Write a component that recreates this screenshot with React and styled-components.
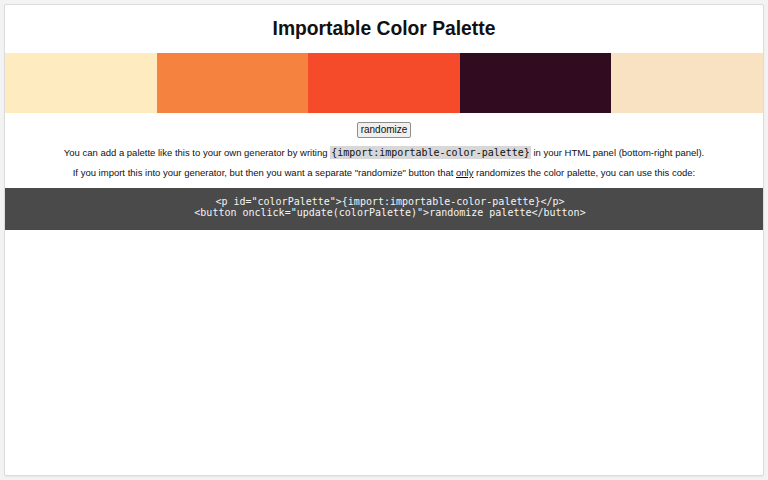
import React, { useState } from "react";
import styled, { createGlobalStyle } from "styled-components";

const GlobalStyle = createGlobalStyle`
  html, body {
    margin: 0;
    padding: 0;
    background: #f3f3f3;
    font-family: "Liberation Sans", Arial, sans-serif;
  }
  body {
    padding: 4px;
  }
`;

const palettes = [
  ["#feebc0", "#f5823f", "#f54b2a", "#310c21", "#f8e2c1"],
  ["#e8f1f2", "#a3cef1", "#6096ba", "#274c77", "#8b8c89"],
  ["#ffcdb2", "#ffb4a2", "#e5989b", "#b5838d", "#6d6875"],
];

export default function App() {
  const [index, setIndex] = useState(0);
  const colors = palettes[index];

  return (
    <>
      <GlobalStyle />
      <Card>
        <Title>Importable Color Palette</Title>
        <Strip>
          {colors.map((c, i) => (
            <Swatch key={i} $color={c} />
          ))}
        </Strip>
        <Controls>
          <Button onClick={() => setIndex((index + 1) % palettes.length)}>
            randomize
          </Button>
        </Controls>
        <Note>
          You can add a palette like this to your own generator by writing{" "}
          <InlineCode>{"{import:importable-color-palette}"}</InlineCode> in your
          HTML panel (bottom-right panel).
        </Note>
        <Note>
          If you import this into your generator, but then you want a separate
          "randomize" button that <u>only</u> randomizes the color palette, you
          can use this code:
        </Note>
        <CodeBlock>
          {'<p id="colorPalette">{import:importable-color-palette}</p>'}
          {"\n"}
          {'<button onclick="update(colorPalette)">randomize palette</button>'}
        </CodeBlock>
      </Card>
    </>
  );
}

const Card = styled.div`
  background: #fff;
  border: 1px solid #dcdcdc;
  border-radius: 2px;
  height: 472px;
  box-sizing: border-box;
  box-shadow: 0 1px 2px rgba(0, 0, 0, 0.06);
`;

const Title = styled.h1`
  margin: 0;
  padding: 13px 0 13px;
  text-align: center;
  font-size: 19.3px;
  line-height: 22px;
  font-weight: 700;
  color: #111;
`;

const Strip = styled.div`
  display: flex;
  height: 60px;
`;

const Swatch = styled.div`
  flex: 1;
  background: ${(p) => p.$color};
`;

const Controls = styled.div`
  display: flex;
  justify-content: center;
  padding-top: 9px;
`;

const Button = styled.button`
  font-family: "Liberation Sans", Arial, sans-serif;
  font-size: 10px;
  line-height: 12px;
  padding: 1px 3px;
  color: #111;
  background: #efefef;
  border: 1px solid #8f8f8f;
  border-radius: 2px;
`;

const Note = styled.p`
  margin: 8.5px 0 0;
  text-align: center;
  font-size: 9.5px;
  line-height: 12px;
  color: #111;
`;

const InlineCode = styled.code`
  font-family: "DejaVu Sans Mono", monospace;
  font-size: 10px;
  background: #d8d8d8;
  padding: 1px 1px;
`;

const CodeBlock = styled.pre`
  margin: 9px 0 0;
  padding: 7.5px 0 12px 12px;
  background: #4a4a4a;
  color: #f4f4f4;
  text-align: center;
  font-family: "DejaVu Sans Mono", monospace;
  font-size: 10px;
  line-height: 11px;
  white-space: pre;
`;
